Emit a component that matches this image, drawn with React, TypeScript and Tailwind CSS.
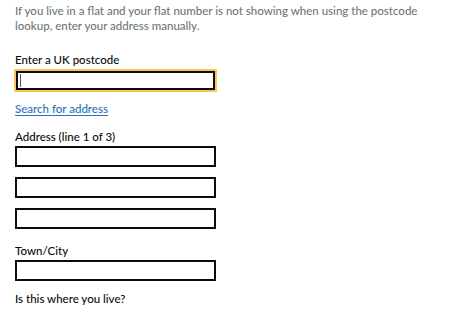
export default function App() {
  const font = { fontFamily: 'Lato, "Liberation Sans", Arial, sans-serif' }
  return (
    <div className="bg-white w-[474px] h-[310px] overflow-hidden pl-[15px] pt-[3px] text-[11.5px] leading-[15px] font-medium text-[#0b0c0c]" style={font}>
      <p className="w-[420px] text-[#6f777b]">
        If you live in a flat and your flat number is not showing when using the postcode lookup, enter your address manually.
      </p>

      <div className="mt-[19px]">
        <label className="block">Enter a UK postcode</label>
        <div className="mt-[2px] w-[203px] h-[23px] -ml-[1px] border-2 border-[#f7c75a] bg-[#0b0c0c] p-[2px]">
          <div className="w-full h-full bg-white flex items-center pl-[2px]">
            <div className="w-[1px] h-[13px] bg-[#555]" />
          </div>
        </div>
      </div>

      <a className="block mt-[9px] w-fit text-[#2a72b5] underline underline-offset-2">Search for address</a>

      <div className="mt-[13px]">
        <label className="block">Address (line 1 of 3)</label>
        <div className="mt-[2px] flex flex-col gap-[10px]">
          <div className="w-[201px] h-[21px] border-2 border-[#0b0c0c] bg-white" />
          <div className="w-[201px] h-[21px] border-2 border-[#0b0c0c] bg-white" />
          <div className="w-[201px] h-[21px] border-2 border-[#0b0c0c] bg-white" />
        </div>
      </div>

      <div className="mt-[14px]">
        <label className="block">Town/City</label>
        <div className="mt-[2px] w-[201px] h-[21px] border-2 border-[#0b0c0c] bg-white" />
      </div>

      <p className="mt-[10px]">Is this where you live?</p>
    </div>
  )
}
